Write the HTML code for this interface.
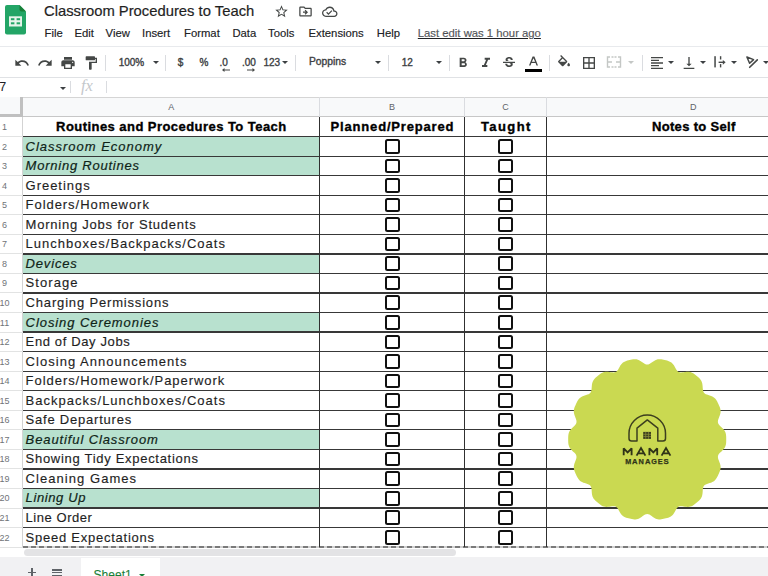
<!DOCTYPE html><html><head><meta charset="utf-8"><style>
*{margin:0;padding:0;box-sizing:border-box}
html,body{width:768px;height:576px;overflow:hidden;background:#fff}
body{font-family:"Liberation Sans",sans-serif;color:#202124}
#root{position:relative;width:768px;height:576px;overflow:hidden}
#root div{position:absolute}
.colhdr{background:#f8f9fa;border-bottom:1px solid #c7c7c7;border-top:1px solid #d5d5d5}
.collet{font-size:9px;color:#5f6368;text-align:center;line-height:20.5px;height:20px}
.vlhdr{width:1px;background:#dadce0}
.corner{left:0;top:97px;width:23px;height:20px;background:#f8f9fa;border-right:3.5px solid #c0c0c0;border-bottom:3.5px solid #c0c0c0}
.rownum{left:-5.5px;width:20px;height:19.55px;line-height:19.55px;font-size:9px;color:#6f7378;text-align:center;}
.rhline{left:0;width:23px;height:1px;background:#e2e3e3}
.fill{left:23px;width:296.5px;background:#b8e1cf}
.hl{left:23px;width:745px;height:1.25px;background:#383838}
.hldash{left:23px;width:745px;height:1.5px;background:repeating-linear-gradient(90deg,#7a7a7a 0 5px,#d0d0d0 5px 8px)}
.vl{width:1.4px;background:#303030}
.ct{font-size:13px;line-height:19.55px;height:19.55px;white-space:nowrap;color:#1f1f1f;-webkit-text-stroke:0.15px #1f1f1f}
.ct.b{font-weight:bold;color:#000;-webkit-text-stroke:0.35px #000}
.ct.i{font-style:italic;color:#0f2418;-webkit-text-stroke:0.2px #0f2418}
.cb{width:15px;height:14.6px;border:2px solid #111;border-radius:2.5px}
.t{white-space:nowrap}
.m{top:28.2px;font-size:11.3px;line-height:11.3px;white-space:nowrap;color:#202124;-webkit-text-stroke:0.15px #202124}
.sep{top:55px;width:1px;height:16px;background:#dadce0}
.tt{top:58px;font-size:10px;line-height:10px;white-space:nowrap;color:#3c4043;-webkit-text-stroke:0.35px #3c4043}
.dd{top:60.5px;width:0;height:0;border-left:3px solid transparent;border-right:3px solid transparent;border-top:3px solid #3c4043}
svg{display:block}

</style></head><body><div id="root">
<!-- logo -->
<div style="left:5px;top:5px;width:21px;height:29.5px">
<svg width="21" height="29.5" viewBox="0 0 21 29.5"><path d="M2 0h12.5L21 6.5V27.5a2 2 0 0 1-2 2H2a2 2 0 0 1-2-2V2a2 2 0 0 1 2-2z" fill="#23a566"/><path d="M14.5 0L21 6.5h-4.5a2 2 0 0 1-2-2z" fill="#188038"/><rect x="4" y="11.3" width="13" height="10.2" fill="#e6f4ea"/><rect x="5.9" y="13.2" width="3.5" height="2" fill="#23a566"/><rect x="11.6" y="13.2" width="3.5" height="2" fill="#23a566"/><rect x="5.9" y="17.3" width="3.5" height="2" fill="#23a566"/><rect x="11.6" y="17.3" width="3.5" height="2" fill="#23a566"/></svg>
</div>
<div class="t" style="left:44px;top:3.5px;font-size:14.8px;line-height:14.8px;color:#1f1f1f;-webkit-text-stroke:0.2px #1f1f1f">Classroom Procedures to Teach</div>
<div style="left:274px;top:4px"><svg width="15" height="15" viewBox="0 0 24 24"><path fill="#444746" d="M22 9.24l-7.19-.62L12 2 9.19 8.63 2 9.24l5.46 4.73L5.82 21 12 17.27 18.18 21l-1.63-7.03L22 9.24zM12 15.4l-3.76 2.27 1-4.28-3.32-2.88 4.38-.38L12 6.1l1.71 4.04 4.38.38-3.32 2.88 1 4.28L12 15.4z"/></svg></div>
<div style="left:297.5px;top:3.5px"><svg width="15" height="15" viewBox="0 0 24 24"><path fill="#444746" d="M20 6h-8l-2-2H4c-1.1 0-1.99.9-1.99 2L2 18c0 1.1.9 2 2 2h16c1.1 0 2-.9 2-2V8c0-1.1-.9-2-2-2zm0 12H4V6h5.17l2 2H20v10zm-7.84-6H8v2h4.16l-1.59 1.59L11.990 17 16 13.01 11.99 9l-1.41 1.41L12.16 12z"/></svg></div>
<div style="left:322px;top:3.5px"><svg width="15.5" height="15.5" viewBox="0 0 24 24"><path fill="#444746" d="M19.35 10.04C18.67 6.590 15.64 4 12 4 9.11 4 6.6 5.64 5.35 8.04 2.34 8.36 0 10.91 0 14c0 3.31 2.69 6 6 6h13c2.76 0 5-2.24 5-5 0-2.64-2.05-4.78-4.65-4.96zM19 18H6c-2.21 0-4-1.79-4-4 0-2.05 1.53-3.76 3.56-3.97l1.07-.11.5-.95C8.08 7.14 9.94 6 12 6c2.62 0 4.88 1.86 5.39 4.43l.3 1.5 1.53.11c1.56.1 2.78 1.41 2.78 2.96 0 1.65-1.35 3-3 3zm-9-3.82l-2.09-2.09L6.5 13.5 10 17l6.01-6.01-1.41-1.41z"/></svg></div>
<!-- menu -->
<div class="m" style="left:44.6px">File</div>
<div class="m" style="left:74.4px">Edit</div>
<div class="m" style="left:105.6px">View</div>
<div class="m" style="left:142px">Insert</div>
<div class="m" style="left:184px">Format</div>
<div class="m" style="left:232.4px">Data</div>
<div class="m" style="left:268px">Tools</div>
<div class="m" style="left:308.5px">Extensions</div>
<div class="m" style="left:376.8px">Help</div>
<div class="m" style="left:417.8px;color:#5f6368;text-decoration:underline">Last edit was 1 hour ago</div>
<!-- toolbar -->
<div style="left:0;top:46px;width:768px;height:1px;background:#e8eaed"></div>
<div style="left:0;top:76.5px;width:768px;height:1px;background:#e0e2e5"></div>
<div id="tb">
<div style="left:13.5px;top:55px"><svg width="16" height="16" viewBox="0 0 24 24"><path fill="#444746" d="M12.5 8c-2.65 0-5.05.99-6.9 2.6L2 7v9h9l-3.62-3.62c1.39-1.16 3.160-1.88 5.12-1.88 3.54 0 6.55 2.31 7.6 5.5l2.37-.78C21.08 11.03 17.15 8 12.5 8z"/></svg></div>
<div style="left:37px;top:55px"><svg width="16" height="16" viewBox="0 0 24 24"><path fill="#444746" d="M18.4 10.6C16.55 8.99 14.15 8 11.5 8c-4.65 0-8.58 3.03-9.96 7.22L3.9 16c1.05-3.19 4.05-5.5 7.6-5.5 1.95 0 3.73.72 5.12 1.88L13 16h9V7l-3.6 3.6z"/></svg></div>
<div style="left:60px;top:54.5px"><svg width="16" height="16" viewBox="0 0 24 24"><path fill="#444746" d="M19 8H5c-1.66 0-3 1.34-3 3v6h4v4h12v-4h4v-6c0-1.66-1.34-3-3-3zm-3 11H8v-5h8v5zm3-7c-.55 0-1-.45-1-1s.45-1 1-1 1 .45 1 1-.45 1-1 1zm-1-9H6v4h12V3z"/></svg></div>
<div style="left:83px;top:54.5px"><svg width="16" height="16" viewBox="0 0 24 24"><path fill="#444746" d="M18 4V3c0-.55-.45-1-1-1H5c-.55 0-1 .45-1 1v4c0 .55.45 1 1 1h12c.55 0 1-.45 1-1V6h1v4H9v11c0 .55.45 1 1 1h2c.55 0 1-.45 1-1v-9h8V4h-3z"/></svg></div>
<div class="sep" style="left:105px"></div>
<div class="tt" style="left:118.7px">100%</div>
<div class="dd" style="left:153px"></div>
<div class="sep" style="left:165px"></div>
<div class="tt" style="left:177.8px">$</div>
<div class="tt" style="left:199.6px">%</div>
<div class="tt" style="left:219.5px">.0</div>
<div style="left:221.5px;top:67.5px"><svg width="8" height="4" viewBox="0 0 8 4"><path d="M0 2L2.5 0v1.4H8v1.2H2.5V4z" fill="#444746"/></svg></div>
<div class="tt" style="left:242px">.00</div>
<div style="left:246.5px;top:67.5px"><svg width="8" height="4" viewBox="0 0 8 4"><path d="M8 2L5.5 0v1.4H0v1.2h5.5V4z" fill="#444746"/></svg></div>
<div class="tt" style="left:263.5px">123</div>
<div class="dd" style="left:282px"></div>
<div class="sep" style="left:295px"></div>
<div class="tt" style="left:308.9px;font-size:10.3px;line-height:10.3px;font-weight:normal;top:56.8px">Poppins</div>
<div class="dd" style="left:374.5px"></div>
<div class="sep" style="left:387.7px"></div>
<div class="tt" style="left:401.7px">12</div>
<div class="dd" style="left:435.5px"></div>
<div class="sep" style="left:448.5px"></div>
<div style="left:455px;top:55px"><svg width="16" height="16" viewBox="0 0 24 24"><path fill="#444746" d="M15.6 10.79c.97-.67 1.65-1.77 1.65-2.79 0-2.26-1.75-4-4-4H7v14h7.04c2.09 0 3.71-1.7 3.71-3.79 0-1.52-.86-2.82-2.15-3.42zM10 6.5h3c.83 0 1.5.67 1.5 1.5s-.67 1.5-1.5 1.5h-3v-3zm3.5 9H10v-3h3.5c.83 0 1.5.67 1.5 1.5s-.67 1.5-1.5 1.5z"/></svg></div>
<div style="left:477.5px;top:55px"><svg width="16" height="16" viewBox="0 0 24 24"><path fill="#444746" d="M10 4v3h2.21l-3.42 8H6v3h8v-3h-2.21l3.42-8H18V4z"/></svg></div>
<div style="left:500.5px;top:54.5px"><svg width="16" height="16" viewBox="0 0 24 24"><path fill="#444746" d="M7.24 8.75c-.26-.48-.39-1.03-.39-1.67 0-.61.13-1.16.4-1.67.26-.5.63-.93 1.11-1.29.48-.35 1.05-.63 1.7-.83.66-.19 1.39-.29 2.18-.29.81 0 1.54.11 2.21.34.66.22 1.23.54 1.69.94.47.4.83.88 1.08 1.43.25.55.38 1.15.38 1.81h-3.01c0-.31-.05-.59-.15-.85-.09-.27-.24-.49-.44-.68-.2-.19-.45-.33-.75-.44-.3-.1-.66-.16-1.060-.16-.39 0-.74.04-1.03.13-.29.09-.53.21-.72.36-.19.16-.34.34-.44.55-.1.21-.15.43-.15.66 0 .48.25.88.74 1.21.38.25.77.48 1.41.7H7.39c-.05-.08-.11-.17-.15-.25zM21 12v-2H3v2h9.62c.18.07.4.14.55.2.37.17.66.34.87.51.21.17.35.36.43.57.07.2.11.43.11.69 0 .23-.05.45-.14.66-.09.2-.23.38-.42.53-.19.15-.42.26-.71.35-.29.08-.63.13-1.01.13-.43 0-.83-.04-1.18-.13s-.66-.23-.91-.42c-.25-.19-.45-.44-.59-.75-.14-.31-.25-.76-.25-1.21H6.4c0 .55.08 1.13.24 1.58.16.45.37.85.65 1.21.28.35.6.66.98.920.37.26.78.48 1.22.65.44.17.9.3 1.38.39.48.08.96.13 1.44.13.8 0 1.53-.09 2.18-.28s1.21-.45 1.670-.79c.46-.34.82-.77 1.07-1.27s.38-1.07.38-1.71c0-.6-.1-1.14-.31-1.61-.05-.11-.11-.23-.17-.33H21z"/></svg></div>
<div style="left:527.5px;top:55.5px"><svg width="11" height="10" viewBox="0 0 11 10"><path fill="#444746" d="M4.6 0.6h1.8l3.6 8.8H8.5L7.6 7H3.4L2.5 9.4H1zM5.5 2.3L3.9 5.8h3.2z"/></svg></div>
<div style="left:524.8px;top:69px;width:17px;height:2.6px;background:#000"></div>
<div class="sep" style="left:549px"></div>
<div style="left:556px;top:55px"><svg width="16" height="16" viewBox="0 0 24 24"><path fill="#444746" d="M16.56 8.94L7.62 0 6.21 1.41l2.38 2.38-5.15 5.15c-.59.59-.59 1.54 0 2.12l5.5 5.5c.29.29.68.44 1.06.44s.77-.15 1.06-.44l5.5-5.5c.59-.58.59-1.53 0-2.12zM5.21 10L10 5.21 14.79 10H5.21zM19 11.5s-2 2.17-2 3.5c0 1.1.9 2 2 2s2-.9 2-2c0-1.33-2-3.5-2-3.5z"/></svg></div>
<div style="left:581px;top:54.5px"><svg width="16" height="16" viewBox="0 0 24 24"><path fill="#444746" d="M3 3v18h18V3H3zm8 16H5v-6h6v6zm0-8H5V5h6v6zm8 8h-6v-6h6v6zm0-8h-6V5h6v6z"/></svg></div>
<div style="left:604px;top:52px"><svg width="20" height="20" viewBox="0 0 20 20"><g fill="none" stroke="#c4c7c5" stroke-width="1.4"><path d="M6 5H3.5V15H6M14 5H16.5V15H14"/><path d="M3.5 10H8M12 10H16.5"/><path d="M7.5 5h2M10.5 5h2M7.5 15h2M10.5 15h2"/></g></svg></div>
<div class="dd" style="left:627.5px;border-top-color:#c4c7c5"></div>
<div class="sep" style="left:642px"></div>
<div style="left:648.5px;top:54.5px"><svg width="16" height="16" viewBox="0 0 24 24"><path fill="#444746" d="M15 15H3v2h12v-2zm0-8H3v2h12V7zM3 13h18v-2H3v2zm0 8h18v-2H3v2zM3 3v2h18V3H3z"/></svg></div>
<div class="dd" style="left:667.5px"></div>
<div style="left:680.5px;top:54.5px"><svg width="16" height="16" viewBox="0 0 24 24"><path fill="#444746" d="M16 13h-3V3h-2v10H8l4 4 4-4zM4 19v2h16v-2H4z"/></svg></div>
<div class="dd" style="left:699.5px"></div>
<div style="left:710px;top:52px"><svg width="20" height="20" viewBox="0 0 20 20"><g fill="#444746"><rect x="4.3" y="4.2" width="1.5" height="11.2"/><rect x="9.9" y="4.2" width="1.4" height="3.3"/><rect x="9.9" y="12.1" width="1.4" height="3.3"/><rect x="8.6" y="9.6" width="5" height="1.4"/><path d="M12.8 7.9L15.6 10.3L12.8 12.7z"/></g></svg></div>
<div class="dd" style="left:731px"></div>
<div style="left:742px;top:52px"><svg width="20" height="20" viewBox="0 0 20 20"><path d="M4.9 5L11.6 7.6L7.6 11.2Z" fill="none" stroke="#444746" stroke-width="1.5" stroke-linejoin="round"/><path d="M7.7 15.3L15.3 7.9" stroke="#444746" stroke-width="1.6" stroke-linecap="round"/></svg></div>
<div class="dd" style="left:763px"></div>
</div>
<!-- formula bar -->
<div style="left:0;top:96.5px;width:768px;height:1px;background:#dadce0"></div>
<div class="t" style="left:-0.8px;top:81.3px;font-size:12.5px;line-height:12.5px;color:#202124">7</div>
<div class="dd" style="left:59.5px;top:86.5px"></div>
<div class="sep" style="left:69.5px;top:81px;height:12px"></div>
<div class="t" style="left:81px;top:78px;font-family:'Liberation Serif',serif;font-style:italic;font-size:16.5px;line-height:16.5px;color:#c4c7cb">fx</div>
<div class="sep" style="left:105.5px;top:81px;height:12px"></div>

<div id="grid">
<div class="colhdr" style="left:0;top:97px;width:768px;height:20px"></div>
<div class="collet" style="left:23.0px;width:296.5px;top:97px">A</div>
<div class="vlhdr" style="left:319.0px;top:97px;height:20px"></div>
<div class="collet" style="left:319.5px;width:145.0px;top:97px">B</div>
<div class="vlhdr" style="left:464.0px;top:97px;height:20px"></div>
<div class="collet" style="left:464.5px;width:82.20000000000005px;top:97px">C</div>
<div class="vlhdr" style="left:546.2px;top:97px;height:20px"></div>
<div class="collet" style="left:546.7px;width:293.29999999999995px;top:97px">D</div>
<div class="vlhdr" style="left:839.5px;top:97px;height:20px"></div>
<div style="left:22.3px;top:117px;width:1px;height:430px;background:#d3d3d3"></div>
<div class="corner"></div>
<div class="rownum" style="top:118.00px">1</div>
<div class="rhline" style="top:136.05px"></div>
<div class="rownum" style="top:137.55px">2</div>
<div class="rhline" style="top:155.60px"></div>
<div class="rownum" style="top:157.10px">3</div>
<div class="rhline" style="top:175.15px"></div>
<div class="rownum" style="top:176.65px">4</div>
<div class="rhline" style="top:194.70px"></div>
<div class="rownum" style="top:196.20px">5</div>
<div class="rhline" style="top:214.25px"></div>
<div class="rownum" style="top:215.75px">6</div>
<div class="rhline" style="top:233.80px"></div>
<div class="rownum" style="top:235.30px">7</div>
<div class="rhline" style="top:253.35px"></div>
<div class="rownum" style="top:254.85px">8</div>
<div class="rhline" style="top:272.90px"></div>
<div class="rownum" style="top:274.40px">9</div>
<div class="rhline" style="top:292.45px"></div>
<div class="rownum" style="top:293.95px">10</div>
<div class="rhline" style="top:312.00px"></div>
<div class="rownum" style="top:313.50px">11</div>
<div class="rhline" style="top:331.55px"></div>
<div class="rownum" style="top:333.05px">12</div>
<div class="rhline" style="top:351.10px"></div>
<div class="rownum" style="top:352.60px">13</div>
<div class="rhline" style="top:370.65px"></div>
<div class="rownum" style="top:372.15px">14</div>
<div class="rhline" style="top:390.20px"></div>
<div class="rownum" style="top:391.70px">15</div>
<div class="rhline" style="top:409.75px"></div>
<div class="rownum" style="top:411.25px">16</div>
<div class="rhline" style="top:429.30px"></div>
<div class="rownum" style="top:430.80px">17</div>
<div class="rhline" style="top:448.85px"></div>
<div class="rownum" style="top:450.35px">18</div>
<div class="rhline" style="top:468.40px"></div>
<div class="rownum" style="top:469.90px">19</div>
<div class="rhline" style="top:487.95px"></div>
<div class="rownum" style="top:489.45px">20</div>
<div class="rhline" style="top:507.50px"></div>
<div class="rownum" style="top:509.00px">21</div>
<div class="rhline" style="top:527.05px"></div>
<div class="rownum" style="top:528.55px">22</div>
<div class="rhline" style="top:546.60px"></div>
<div class="fill" style="top:136.55px;height:19.55px"></div>
<div class="fill" style="top:156.10px;height:19.55px"></div>
<div class="fill" style="top:253.85px;height:19.55px"></div>
<div class="fill" style="top:312.50px;height:19.55px"></div>
<div class="fill" style="top:429.80px;height:19.55px"></div>
<div class="fill" style="top:488.45px;height:19.55px"></div>
<div class="hl" style="top:135.95px"></div>
<div class="hl" style="top:155.50px"></div>
<div class="hl" style="top:175.05px"></div>
<div class="hl" style="top:194.60px"></div>
<div class="hl" style="top:214.15px"></div>
<div class="hl" style="top:233.70px"></div>
<div class="hl" style="top:253.25px"></div>
<div class="hl" style="top:272.80px"></div>
<div class="hl" style="top:292.35px"></div>
<div class="hl" style="top:311.90px"></div>
<div class="hl" style="top:331.45px"></div>
<div class="hl" style="top:351.00px"></div>
<div class="hl" style="top:370.55px"></div>
<div class="hl" style="top:390.10px"></div>
<div class="hl" style="top:409.65px"></div>
<div class="hl" style="top:429.20px"></div>
<div class="hl" style="top:448.75px"></div>
<div class="hl" style="top:468.30px"></div>
<div class="hl" style="top:487.85px"></div>
<div class="hl" style="top:507.40px"></div>
<div class="hl" style="top:526.95px"></div>
<div class="hldash" style="top:546.35px"></div>
<div class="vl" style="left:318.75px;top:117.0px;height:430.10px"></div>
<div class="vl" style="left:463.75px;top:117.0px;height:430.10px"></div>
<div class="vl" style="left:545.95px;top:117.0px;height:430.10px"></div>
<div class="ct b" style="left:56.10px;top:117.00px;letter-spacing:0.447px">Routines and Procedures To Teach</div>
<div class="ct b" style="left:330.60px;top:117.00px;letter-spacing:0.824px">Planned/Prepared</div>
<div class="ct b" style="left:480.90px;top:117.00px;letter-spacing:1.428px">Taught</div>
<div class="ct b" style="left:652.00px;top:117.00px;letter-spacing:0.319px">Notes to Self</div>
<div class="ct i" style="left:25.6px;top:136.55px;letter-spacing:0.985px">Classroom Economy</div>
<div class="cb" style="left:498.3px;top:139.03px"></div>
<div class="cb" style="left:384.5px;top:139.03px"></div>
<div class="ct i" style="left:25.6px;top:156.10px;letter-spacing:0.761px">Morning Routines</div>
<div class="cb" style="left:498.3px;top:158.57px"></div>
<div class="cb" style="left:384.5px;top:158.57px"></div>
<div class="ct" style="left:25.6px;top:175.65px;letter-spacing:0.966px">Greetings</div>
<div class="cb" style="left:498.3px;top:178.12px"></div>
<div class="cb" style="left:384.5px;top:178.12px"></div>
<div class="ct" style="left:25.6px;top:195.20px;letter-spacing:0.947px">Folders/Homework</div>
<div class="cb" style="left:498.3px;top:197.67px"></div>
<div class="cb" style="left:384.5px;top:197.67px"></div>
<div class="ct" style="left:25.6px;top:214.75px;letter-spacing:0.765px">Morning Jobs for Students</div>
<div class="cb" style="left:498.3px;top:217.22px"></div>
<div class="cb" style="left:384.5px;top:217.22px"></div>
<div class="ct" style="left:25.6px;top:234.30px;letter-spacing:1.006px">Lunchboxes/Backpacks/Coats</div>
<div class="cb" style="left:498.3px;top:236.78px"></div>
<div class="cb" style="left:384.5px;top:236.78px"></div>
<div class="ct i" style="left:25.6px;top:253.85px;letter-spacing:0.825px">Devices</div>
<div class="cb" style="left:498.3px;top:256.32px"></div>
<div class="cb" style="left:384.5px;top:256.32px"></div>
<div class="ct" style="left:25.6px;top:273.40px;letter-spacing:1.076px">Storage</div>
<div class="cb" style="left:498.3px;top:275.87px"></div>
<div class="cb" style="left:384.5px;top:275.87px"></div>
<div class="ct" style="left:25.6px;top:292.95px;letter-spacing:0.828px">Charging Permissions</div>
<div class="cb" style="left:498.3px;top:295.43px"></div>
<div class="cb" style="left:384.5px;top:295.43px"></div>
<div class="ct i" style="left:25.6px;top:312.50px;letter-spacing:0.926px">Closing Ceremonies</div>
<div class="cb" style="left:498.3px;top:314.97px"></div>
<div class="cb" style="left:384.5px;top:314.97px"></div>
<div class="ct" style="left:25.6px;top:332.05px;letter-spacing:0.629px">End of Day Jobs</div>
<div class="cb" style="left:498.3px;top:334.52px"></div>
<div class="cb" style="left:384.5px;top:334.52px"></div>
<div class="ct" style="left:25.6px;top:351.60px;letter-spacing:1.035px">Closing Announcements</div>
<div class="cb" style="left:498.3px;top:354.07px"></div>
<div class="cb" style="left:384.5px;top:354.07px"></div>
<div class="ct" style="left:25.6px;top:371.15px;letter-spacing:0.954px">Folders/Homework/Paperwork</div>
<div class="cb" style="left:498.3px;top:373.62px"></div>
<div class="cb" style="left:384.5px;top:373.62px"></div>
<div class="ct" style="left:25.6px;top:390.70px;letter-spacing:1.006px">Backpacks/Lunchboxes/Coats</div>
<div class="cb" style="left:498.3px;top:393.17px"></div>
<div class="cb" style="left:384.5px;top:393.17px"></div>
<div class="ct" style="left:25.6px;top:410.25px;letter-spacing:0.781px">Safe Departures</div>
<div class="cb" style="left:498.3px;top:412.72px"></div>
<div class="cb" style="left:384.5px;top:412.72px"></div>
<div class="ct i" style="left:25.6px;top:429.80px;letter-spacing:0.887px">Beautiful Classroom</div>
<div class="cb" style="left:498.3px;top:432.27px"></div>
<div class="cb" style="left:384.5px;top:432.27px"></div>
<div class="ct" style="left:25.6px;top:449.35px;letter-spacing:0.705px">Showing Tidy Expectations</div>
<div class="cb" style="left:498.3px;top:451.82px"></div>
<div class="cb" style="left:384.5px;top:451.82px"></div>
<div class="ct" style="left:25.6px;top:468.90px;letter-spacing:1.052px">Cleaning Games</div>
<div class="cb" style="left:498.3px;top:471.38px"></div>
<div class="cb" style="left:384.5px;top:471.38px"></div>
<div class="ct i" style="left:25.6px;top:488.45px;letter-spacing:0.608px">Lining Up</div>
<div class="cb" style="left:498.3px;top:490.92px"></div>
<div class="cb" style="left:384.5px;top:490.92px"></div>
<div class="ct" style="left:25.6px;top:508.00px;letter-spacing:0.542px">Line Order</div>
<div class="cb" style="left:498.3px;top:510.47px"></div>
<div class="cb" style="left:384.5px;top:510.47px"></div>
<div class="ct" style="left:25.6px;top:527.55px;letter-spacing:0.756px">Speed Expectations</div>
<div class="cb" style="left:498.3px;top:530.02px"></div>
<div class="cb" style="left:384.5px;top:530.02px"></div>
</div>
<div style="left:560px;top:350px;width:180px;height:180px"><svg width="180" height="180" viewBox="0 0 180 180"><path d="M166.22,89.30 L166.21,88.08 L166.18,86.87 L166.11,85.65 L165.96,84.45 L165.70,83.25 L165.29,82.07 L164.70,80.92 L163.93,79.81 L163.01,78.74 L161.97,77.71 L160.90,76.71 L159.89,75.73 L159.02,74.75 L158.37,73.74 L157.99,72.68 L157.89,71.55 L158.05,70.35 L158.42,69.08 L158.92,67.74 L159.46,66.37 L159.95,64.98 L160.34,63.60 L160.56,62.26 L160.61,60.96 L160.48,59.71 L160.21,58.52 L159.83,57.36 L159.39,56.23 L158.90,55.13 L158.40,54.03 L157.88,52.93 L157.33,51.85 L156.76,50.79 L156.11,49.77 L155.37,48.81 L154.51,47.93 L153.49,47.15 L152.33,46.49 L151.04,45.94 L149.68,45.48 L148.30,45.05 L146.97,44.62 L145.77,44.13 L144.76,43.51 L143.97,42.73 L143.40,41.76 L143.04,40.60 L142.84,39.29 L142.72,37.87 L142.63,36.39 L142.49,34.91 L142.26,33.50 L141.89,32.19 L141.38,31.00 L140.74,29.93 L140.00,28.98 L139.17,28.10 L138.29,27.29 L137.39,26.50 L136.47,25.74 L135.54,24.99 L134.60,24.25 L133.63,23.56 L132.62,22.92 L131.54,22.39 L130.39,21.98 L129.15,21.74 L127.83,21.66 L126.44,21.74 L125.01,21.93 L123.58,22.16 L122.21,22.37 L120.92,22.45 L119.75,22.35 L118.70,22.00 L117.79,21.38 L116.97,20.50 L116.24,19.41 L115.53,18.18 L114.83,16.88 L114.08,15.62 L113.27,14.45 L112.39,13.43 L111.43,12.58 L110.40,11.91 L109.33,11.38 L108.21,10.97 L107.08,10.62 L105.93,10.32 L104.78,10.04 L103.63,9.78 L102.47,9.54 L101.30,9.34 L100.13,9.22 L98.93,9.22 L97.72,9.37 L96.50,9.70 L95.28,10.22 L94.06,10.91 L92.85,11.72 L91.67,12.57 L90.51,13.37 L89.39,14.02 L88.29,14.45 L87.20,14.60 L86.11,14.45 L85.01,14.02 L83.89,13.37 L82.73,12.57 L81.55,11.72 L80.34,10.91 L79.12,10.22 L77.90,9.70 L76.68,9.37 L75.47,9.22 L74.27,9.22 L73.10,9.34 L71.93,9.54 L70.77,9.78 L69.62,10.04 L68.47,10.32 L67.32,10.62 L66.19,10.97 L65.07,11.38 L64.00,11.91 L62.97,12.58 L62.01,13.43 L61.13,14.45 L60.32,15.62 L59.57,16.88 L58.87,18.18 L58.16,19.41 L57.43,20.50 L56.61,21.38 L55.70,22.00 L54.65,22.35 L53.48,22.45 L52.19,22.37 L50.82,22.16 L49.39,21.93 L47.96,21.74 L46.57,21.66 L45.25,21.74 L44.01,21.98 L42.86,22.39 L41.78,22.92 L40.77,23.56 L39.80,24.25 L38.86,24.99 L37.93,25.74 L37.01,26.50 L36.11,27.29 L35.23,28.10 L34.40,28.98 L33.66,29.93 L33.02,31.00 L32.51,32.19 L32.14,33.50 L31.91,34.91 L31.77,36.39 L31.68,37.87 L31.56,39.29 L31.36,40.60 L31.00,41.76 L30.43,42.73 L29.64,43.51 L28.63,44.13 L27.43,44.62 L26.10,45.05 L24.72,45.48 L23.36,45.94 L22.07,46.49 L20.91,47.15 L19.89,47.93 L19.03,48.81 L18.29,49.77 L17.64,50.79 L17.07,51.85 L16.52,52.93 L16.00,54.03 L15.50,55.13 L15.01,56.23 L14.57,57.36 L14.19,58.52 L13.92,59.71 L13.79,60.96 L13.84,62.26 L14.06,63.60 L14.45,64.98 L14.94,66.37 L15.48,67.74 L15.98,69.08 L16.35,70.35 L16.51,71.55 L16.41,72.68 L16.03,73.74 L15.38,74.75 L14.51,75.73 L13.50,76.71 L12.43,77.71 L11.39,78.74 L10.47,79.81 L9.70,80.92 L9.11,82.07 L8.70,83.25 L8.44,84.45 L8.29,85.65 L8.22,86.87 L8.19,88.08 L8.18,89.30 L8.19,90.52 L8.22,91.73 L8.29,92.95 L8.44,94.15 L8.70,95.35 L9.11,96.53 L9.70,97.68 L10.47,98.79 L11.39,99.86 L12.43,100.89 L13.50,101.89 L14.51,102.87 L15.38,103.85 L16.03,104.86 L16.41,105.92 L16.51,107.05 L16.35,108.25 L15.98,109.52 L15.48,110.86 L14.94,112.23 L14.45,113.62 L14.06,115.00 L13.84,116.34 L13.79,117.64 L13.92,118.89 L14.19,120.08 L14.57,121.24 L15.01,122.37 L15.50,123.47 L16.00,124.57 L16.52,125.67 L17.07,126.75 L17.64,127.81 L18.29,128.83 L19.03,129.79 L19.89,130.67 L20.91,131.45 L22.07,132.11 L23.36,132.66 L24.72,133.12 L26.10,133.55 L27.43,133.98 L28.63,134.47 L29.64,135.09 L30.43,135.87 L31.00,136.84 L31.36,138.00 L31.56,139.31 L31.68,140.73 L31.77,142.21 L31.91,143.69 L32.14,145.10 L32.51,146.41 L33.02,147.60 L33.66,148.67 L34.40,149.62 L35.23,150.50 L36.11,151.31 L37.01,152.10 L37.93,152.86 L38.86,153.61 L39.80,154.35 L40.77,155.04 L41.78,155.68 L42.86,156.21 L44.01,156.62 L45.25,156.86 L46.57,156.94 L47.96,156.86 L49.39,156.67 L50.82,156.44 L52.19,156.23 L53.48,156.15 L54.65,156.25 L55.70,156.60 L56.61,157.22 L57.43,158.10 L58.16,159.19 L58.87,160.42 L59.57,161.72 L60.32,162.98 L61.13,164.15 L62.01,165.17 L62.97,166.02 L64.00,166.69 L65.07,167.22 L66.19,167.63 L67.32,167.98 L68.47,168.28 L69.62,168.56 L70.77,168.82 L71.93,169.06 L73.10,169.26 L74.27,169.38 L75.47,169.38 L76.68,169.23 L77.90,168.90 L79.12,168.38 L80.34,167.69 L81.55,166.88 L82.73,166.03 L83.89,165.23 L85.01,164.58 L86.11,164.15 L87.20,164.00 L88.29,164.15 L89.39,164.58 L90.51,165.23 L91.67,166.03 L92.85,166.88 L94.06,167.69 L95.28,168.38 L96.50,168.90 L97.72,169.23 L98.93,169.38 L100.13,169.38 L101.30,169.26 L102.47,169.06 L103.63,168.82 L104.78,168.56 L105.93,168.28 L107.08,167.98 L108.21,167.63 L109.33,167.22 L110.40,166.69 L111.43,166.02 L112.39,165.17 L113.27,164.15 L114.08,162.98 L114.83,161.72 L115.53,160.42 L116.24,159.19 L116.97,158.10 L117.79,157.22 L118.70,156.60 L119.75,156.25 L120.92,156.15 L122.21,156.23 L123.58,156.44 L125.01,156.67 L126.44,156.86 L127.83,156.94 L129.15,156.86 L130.39,156.62 L131.54,156.21 L132.62,155.68 L133.63,155.04 L134.60,154.35 L135.54,153.61 L136.47,152.86 L137.39,152.10 L138.29,151.31 L139.17,150.50 L140.00,149.62 L140.74,148.67 L141.38,147.60 L141.89,146.41 L142.26,145.10 L142.49,143.69 L142.63,142.21 L142.72,140.73 L142.84,139.31 L143.04,138.00 L143.40,136.84 L143.97,135.87 L144.76,135.09 L145.77,134.47 L146.97,133.98 L148.30,133.55 L149.68,133.12 L151.04,132.66 L152.33,132.11 L153.49,131.45 L154.51,130.67 L155.37,129.79 L156.11,128.83 L156.76,127.81 L157.33,126.75 L157.88,125.67 L158.40,124.57 L158.90,123.47 L159.39,122.37 L159.83,121.24 L160.21,120.08 L160.48,118.89 L160.61,117.64 L160.56,116.34 L160.34,115.00 L159.95,113.62 L159.46,112.23 L158.92,110.86 L158.42,109.52 L158.05,108.25 L157.89,107.05 L157.99,105.92 L158.37,104.86 L159.02,103.85 L159.89,102.87 L160.90,101.89 L161.97,100.89 L163.01,99.86 L163.93,98.79 L164.70,97.68 L165.29,96.53 L165.70,95.35 L165.96,94.15 L166.11,92.95 L166.18,91.73 L166.21,90.52 L166.22,89.30Z" fill="#cad951"/>
<path d="M77 91 H71.5 a2.5 2.5 0 0 1 -2.5 -2.5 V83.35 A18.25 18.25 0 0 1 105.5 83.35 V88.5 a2.5 2.5 0 0 1 -2.5 2.5 H97.8 V78.2 L87.3 69.9 L77 78.2 Z" fill="none" stroke="#3d3f1f" stroke-width="1.5" stroke-linejoin="round"/>
<rect x="83.2" y="81.9" width="7.8" height="7" fill="#3d3f1f"/><rect x="85.45" y="81.9" width="0.7" height="7" fill="#8a8f3a"/><rect x="83.2" y="83.88" width="7.8" height="0.7" fill="#8a8f3a"/><rect x="88.05" y="81.9" width="0.7" height="7" fill="#8a8f3a"/><rect x="83.2" y="86.22" width="7.8" height="0.7" fill="#8a8f3a"/>
<path d="M63.70 105.30V98.30L67.65 102.40L71.60 98.30V105.30M89.40 105.30V98.30L93.30 102.40L97.20 98.30V105.30M76.60 105.60L81.00 98.00L85.40 105.60M78.20 103.40H83.80M101.60 105.60L106.00 98.00L110.40 105.60M103.20 103.40H108.80" fill="none" stroke="#2f3318" stroke-width="1.85" stroke-linejoin="miter" stroke-miterlimit="2.5"/>
<text x="65.30" y="113.8" textLength="6.0" lengthAdjust="spacingAndGlyphs" font-family="Liberation Sans" font-weight="bold" font-size="7.6" fill="#2f3318" stroke="#2f3318" stroke-width="0.25">M</text><text x="72.00" y="113.8" textLength="5.5" lengthAdjust="spacingAndGlyphs" font-family="Liberation Sans" font-weight="bold" font-size="7.6" fill="#2f3318" stroke="#2f3318" stroke-width="0.25">A</text><text x="78.60" y="113.8" textLength="5.3" lengthAdjust="spacingAndGlyphs" font-family="Liberation Sans" font-weight="bold" font-size="7.6" fill="#2f3318" stroke="#2f3318" stroke-width="0.25">N</text><text x="84.90" y="113.8" textLength="5.5" lengthAdjust="spacingAndGlyphs" font-family="Liberation Sans" font-weight="bold" font-size="7.6" fill="#2f3318" stroke="#2f3318" stroke-width="0.25">A</text><text x="91.20" y="113.8" textLength="5.6" lengthAdjust="spacingAndGlyphs" font-family="Liberation Sans" font-weight="bold" font-size="7.6" fill="#2f3318" stroke="#2f3318" stroke-width="0.25">G</text><text x="97.70" y="113.8" textLength="4.9" lengthAdjust="spacingAndGlyphs" font-family="Liberation Sans" font-weight="bold" font-size="7.6" fill="#2f3318" stroke="#2f3318" stroke-width="0.25">E</text><text x="103.60" y="113.8" textLength="5.2" lengthAdjust="spacingAndGlyphs" font-family="Liberation Sans" font-weight="bold" font-size="7.6" fill="#2f3318" stroke="#2f3318" stroke-width="0.25">S</text>
</svg></div>
<div style="left:0;top:548px;width:768px;height:9px;background:#fff"></div>
<div style="left:24px;top:548.7px;width:431.5px;height:7px;border-radius:3.5px;background:#e3e3e5"></div>
<div style="left:0;top:556.8px;width:768px;height:20px;background:#f1f1f3"></div>
<div style="left:27.5px;top:571.5px;width:8.5px;height:1.5px;background:#5f6368"></div>
<div style="left:31px;top:568px;width:1.5px;height:8.5px;background:#5f6368"></div>
<div style="left:52px;top:569.3px;width:10px;height:1.3px;background:#5f6368"></div>
<div style="left:52px;top:572px;width:10px;height:1.3px;background:#5f6368"></div>
<div style="left:52px;top:574.7px;width:10px;height:1.3px;background:#5f6368"></div>
<div style="left:81px;top:557.5px;width:79px;height:20px;background:#fff"></div>
<div class="t" style="left:93.5px;top:568.5px;font-size:12.1px;line-height:12.1px;color:#188038;-webkit-text-stroke:0.1px #188038">Sheet1</div>
<div class="dd" style="left:139px;top:573.5px;border-top-color:#188038"></div>

</div></body></html>
